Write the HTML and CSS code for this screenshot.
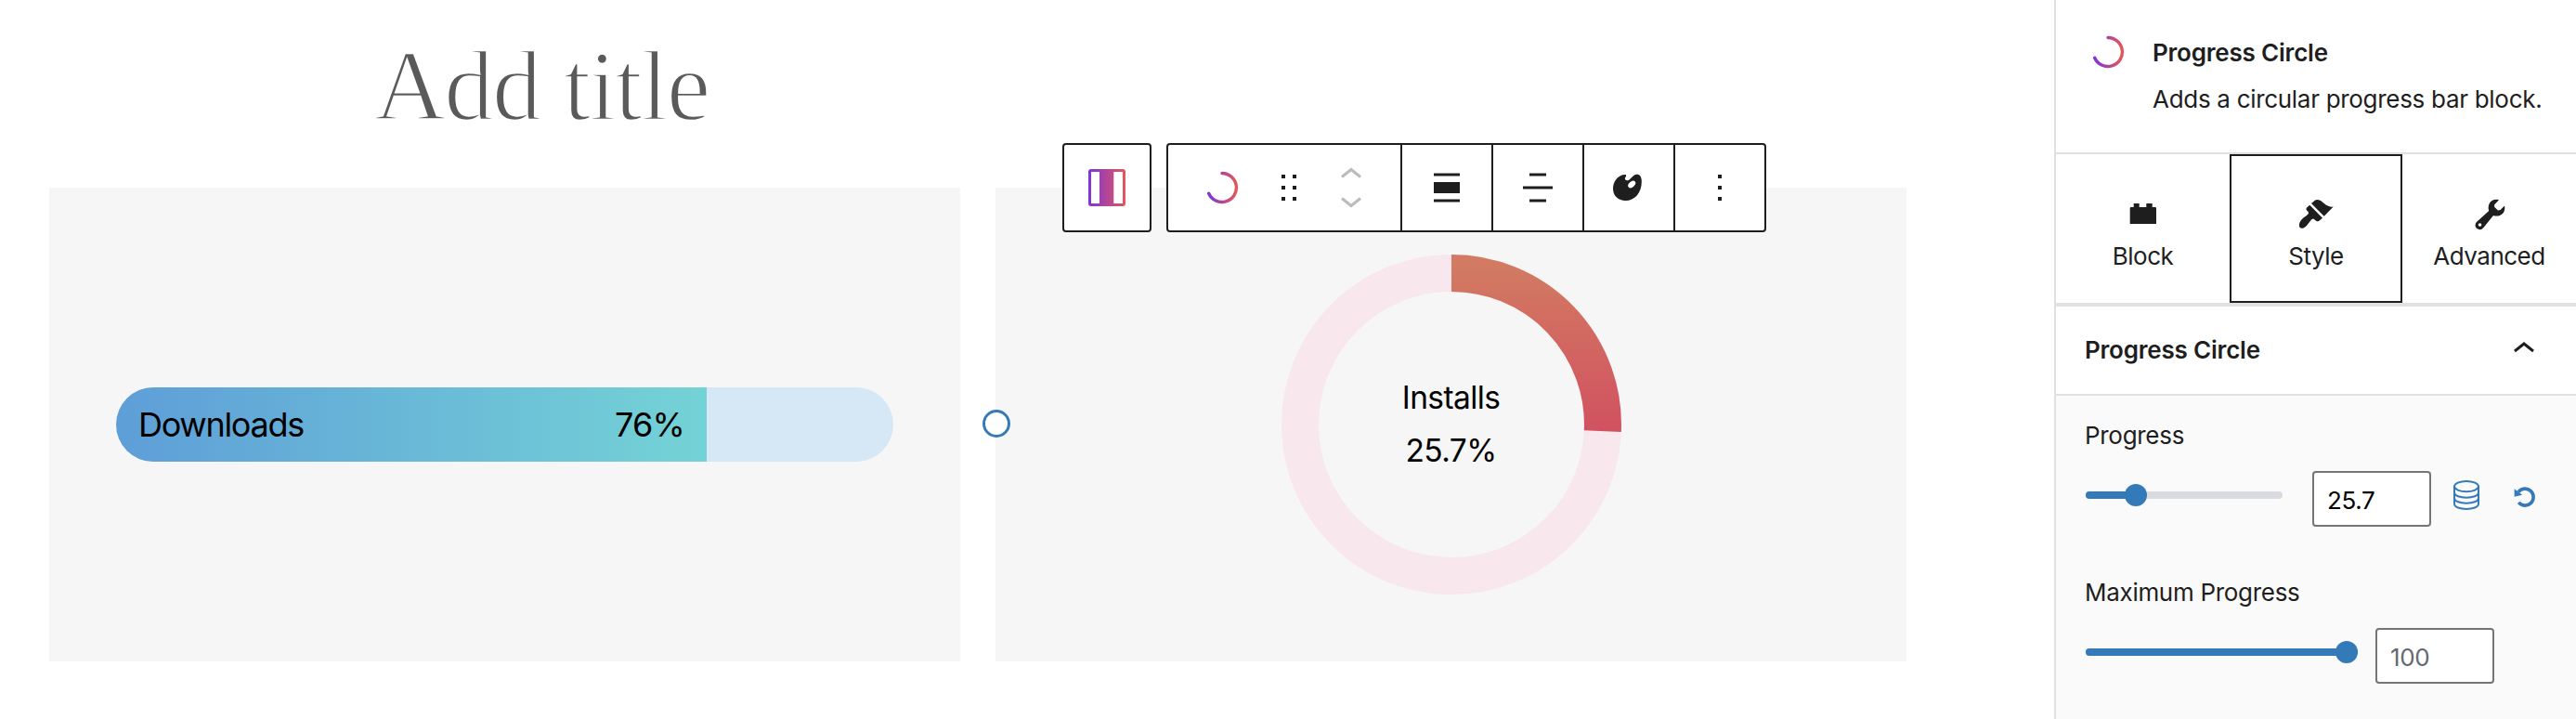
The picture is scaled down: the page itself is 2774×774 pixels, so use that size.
FILE: index.html
```
<!DOCTYPE html>
<html lang="en">

<head>
    <meta charset="UTF-8">
    <title>Add title</title>
    <link rel="stylesheet" href="styles.css">
</head>

<body>
    <svg class="defs" width="0" height="0">
        <defs>
            <linearGradient id="brand" x1="0" y1="0" x2="1" y2="0">
                <stop offset="0" stop-color="#7f35d6" />
                <stop offset="1" stop-color="#e3575b" />
            </linearGradient>
            <linearGradient id="ring" gradientUnits="userSpaceOnUse" x1="0" y1="0" x2="0" y2="190">
                <stop offset="0.05" stop-color="#d27b62" />
                <stop offset="1" stop-color="#d15160" />
            </linearGradient>
            <symbol id="circle-icon" viewBox="0 0 36 36">
                <path d="M18 2.5 A15.5 15.5 0 1 1 3.7 24.2" fill="none" stroke="url(#brand)" stroke-width="3.4" stroke-linecap="round" />
            </symbol>
        </defs>
    </svg>

    <main class="editor">
        <h1 class="title">Add title</h1>
        <div class="columns">
            <div class="column">
                <div class="bar">
                    <div class="bar-fill" style="width: 76%">
                        <span class="bar-label">Downloads</span>
                        <span>76%</span>
                    </div>
                </div>
            </div>
            <div class="column">
                <span class="handle"></span>
                <div class="circle">
                    <svg width="366" height="366" viewBox="0 0 366 366">
                        <circle cx="183" cy="183" r="163" fill="none" stroke="#f8e7ed" stroke-width="40" />
                        <path d="M183 20 A163 163 0 0 1 345.8 190.2" fill="none" stroke="url(#ring)" stroke-width="40" />
                    </svg>
                    <div class="circle-text">
                        <span>Installs</span>
                        <span>25.7%</span>
                    </div>
                </div>
            </div>
        </div>

        <div class="toolbar">
            <div class="group parent">
                <svg width="40" height="40" viewBox="0 0 40 40">
                    <path fill="url(#brand)" fill-rule="evenodd" d="M3 0H37Q40 0 40 3V37Q40 40 37 40H3Q0 40 0 37V3Q0 0 3 0ZM3 3V37H12V3ZM27.3 3V37H37V3Z" />
                </svg>
            </div>
            <div class="group">
                <div class="cell wide">
                    <svg class="block-icon" width="36" height="36"><use href="#circle-icon" /></svg>
                    <svg width="16" height="28" fill="#1e1e1e">
                        <path d="M0 0h4v4h-4zM12 0h4v4h-4zM0 12h4v4h-4zM12 12h4v4h-4zM0 24h4v4h-4zM12 24h4v4h-4z" />
                    </svg>
                    <svg class="movers" width="24" height="44" fill="none" stroke="#bbb" stroke-width="3">
                        <path d="M2 10.5 L12 2.5 L22 10.5 M2 33.5 L12 41.5 L22 33.5" />
                    </svg>
                </div>
                <div class="cell">
                    <svg width="32" height="32" fill="#1e1e1e">
                        <path d="M2 .5h28v3h-28zM2 10h28v12h-28zM2 28.5h28v3h-28z" />
                    </svg>
                </div>
                <div class="cell">
                    <svg width="32" height="32" fill="#1e1e1e">
                        <path d="M7 .5h18v3h-18zM0 14.5h32v3h-32zM7 28.5h18v3h-18z" />
                    </svg>
                </div>
                <div class="cell">
                    <svg width="40" height="40" fill="#1e1e1e">
                        <path d="M17 6C8 5.5 3 14 3 21C3 29 9 34 16.5 34C26 34 34 26 33.8 13C33.8 8 31.5 5.5 28.5 5.7C24 6 22.5 11 19 12.3C16.5 12.5 15.5 11 16 9.5Q17.5 7.5 17 6Z" />
                        <ellipse cx="23.2" cy="16.4" rx="4.6" ry="3" transform="rotate(-42 23.2 16.4)" fill="#fff" />
                    </svg>
                </div>
                <div class="cell">
                    <svg width="4" height="28" fill="#1e1e1e">
                        <path d="M0 0h4v4h-4zM0 12h4v4h-4zM0 24h4v4h-4z" />
                    </svg>
                </div>
            </div>
        </div>
    </main>

    <aside class="sidebar">
        <div class="card">
            <svg width="36" height="36"><use href="#circle-icon" /></svg>
            <div>
                <h2>Progress Circle</h2>
                <p>Adds a circular progress bar block.</p>
            </div>
        </div>

        <div class="tabs">
            <div class="tab">
                <svg width="40" height="40" fill="#1e1e1e">
                    <path d="M9.7 12V8h6v4h7.6V8h6.4v4H33q1 0 1 1V30H5.7V13q0-1 1-1Z" />
                </svg>
                <span>Block</span>
            </div>
            <div class="tab active">
                <svg width="40" height="40" fill="#1e1e1e">
                    <path d="M15 8L18.5 5Q21 3 25 5C29 8 33 12.5 38.7 11.6L28.7 21.7Z" />
                    <path d="M13.3 9.7L10 12.5Q8.8 14 10 15.5Q13 17.5 11.5 19.5Q10 21 7 23C3 26 1.2 30 2.3 33.5C4.5 36 8 34.5 10.3 31.5Q13 28 15 25.5Q17 24 18 25L20.5 27Q22.5 28 24 26.3L27 23.7Z" />
                </svg>
                <span>Style</span>
            </div>
            <div class="tab">
                <svg width="40" height="40" fill="#1e1e1e">
                    <path d="M30 4.3C22 2 17 9 19.2 16L6.2 27.8C4 30 4 33 6 34.8C8.5 36.8 11 36.5 13 34.5L24 21C31 23.5 38 18 36 10.5L31.5 15L29 15.5L25.3 12L25 9.5Z" />
                    <circle cx="9.5" cy="31" r="1.8" fill="#fff" />
                </svg>
                <span>Advanced</span>
            </div>
        </div>

        <div class="panel-head">
            <h2>Progress Circle</h2>
            <svg width="24" height="14" fill="none" stroke="#1e1e1e" stroke-width="3">
                <path d="M2 11 L12 3 L22 11" />
            </svg>
        </div>

        <div class="panel">
            <div class="field">
                <label for="progress">Progress</label>
                <div class="row">
                    <div class="slider short">
                        <div class="slider-fill" style="width: 25.7%"><i></i></div>
                    </div>
                    <input type="text" id="progress" value="25.7">
                    <svg class="db" width="28" height="32" viewBox="0 0 28 32" fill="none" stroke="#357ab8" stroke-width="2">
                        <ellipse cx="14" cy="6.6" rx="13" ry="5.6" />
                        <path d="M1 6.6V25.2C1 32.8 27 32.8 27 25.2V6.6M1 13C1 20.6 27 20.6 27 13M1 19C1 26.6 27 26.6 27 19" />
                    </svg>
                    <svg class="undo" width="24" height="24" viewBox="0 0 24 24">
                        <path d="M5 6.6A9 9 0 1 1 5.2 17.9" fill="none" stroke="#357ab8" stroke-width="3.6" />
                        <path d="M.6 3.2V11.8L9.2 9.8Z" fill="#357ab8" />
                    </svg>
                </div>
            </div>
            <div class="field">
                <label for="max">Maximum Progress</label>
                <div class="row">
                    <div class="slider long">
                        <div class="slider-fill" style="width: 100%"><i></i></div>
                    </div>
                    <input type="text" id="max" placeholder="100">
                </div>
            </div>
        </div>
    </aside>
</body>

</html>
```
FILE: styles.css
```
* {
    box-sizing: border-box;
}

body {
    display: flex;
    height: 774px;
    margin: 0;
    overflow: hidden;
    background-color: #fff;
    color: #1e1e1e;
    font-family: Inter, sans-serif;
    font-size: 26px;
    line-height: 34px;
}

h1, h2, p {
    margin: 0;
}

svg {
    display: block;
    flex: none;
}

.defs {
    position: absolute;
}

/* editor */
.editor {
    position: relative;
    width: 2212px;
    padding: 32px 53px 0;
}

.title {
    height: 170px;
    padding-left: 350px;
    color: #5a5a5a;
    font-family: "Liberation Serif", serif;
    font-size: 107px;
    font-weight: 400;
    line-height: 122px;
    letter-spacing: -1.9px;
    -webkit-text-stroke: 2.4px #fff;
}

.columns {
    display: flex;
    gap: 38px;
}

.column {
    position: relative;
    display: flex;
    align-items: center;
    justify-content: center;
    width: 981px;
    height: 510px;
    background-color: #f6f6f6;
    color: #000;
}

.bar {
    width: 837px;
    height: 80px;
    border-radius: 40px;
    background-color: #d6e7f5;
    overflow: hidden;
    font-size: 36px;
}

.bar-fill {
    display: flex;
    align-items: center;
    justify-content: space-between;
    height: 100%;
    padding: 0 24px;
    background: linear-gradient(90deg, #5e9ed8, #74d3d6);
    letter-spacing: -0.8px;
}

.bar-label {
    letter-spacing: -1.3px;
}

.handle {
    position: absolute;
    top: 239px;
    left: -14px;
    width: 30px;
    height: 30px;
    border: 3px solid #357ab8;
    border-radius: 50%;
    background-color: #fff;
}

.circle {
    position: relative;
}

.circle-text {
    position: absolute;
    inset: 0;
    display: flex;
    flex-direction: column;
    align-items: center;
    justify-content: center;
    font-size: 33.5px;
    line-height: 57px;
    letter-spacing: -0.6px;
}

/* toolbar */
.toolbar {
    position: absolute;
    top: 154px;
    left: 1144px;
    display: flex;
    gap: 16px;
}

.group {
    display: flex;
    height: 96px;
    border: 2px solid #1e1e1e;
    border-radius: 4px;
    background-color: #fff;
}

.parent {
    align-items: center;
    justify-content: center;
    width: 96px;
}

.cell {
    display: flex;
    align-items: center;
    justify-content: center;
    width: 98px;
    border-left: 2px solid #1e1e1e;
}

.cell.wide {
    justify-content: flex-start;
    width: 250px;
    border-left: 0;
}

.block-icon {
    margin: 0 46px 0 40px;
}

.movers {
    margin-left: 47px;
}

/* sidebar */
.sidebar {
    width: 562px;
    border-left: 2px solid #e0e0e0;
    letter-spacing: -0.3px;
}

.sidebar h2 {
    font-size: 26px;
    font-weight: 600;
    letter-spacing: -0.2px;
}

.card {
    display: flex;
    gap: 30px;
    height: 166px;
    padding: 38px 0 0 38px;
    border-bottom: 2px solid #e0e0e0;
}

.card h2 {
    margin: 2px 0 16px;
}

.card p {
    white-space: nowrap;
}

.tabs {
    display: grid;
    grid-template-columns: 187px 186px 187px;
    height: 164px;
    border-bottom: 4px solid #e0e1e3;
}

.tab {
    display: flex;
    flex-direction: column;
    gap: 8px;
    align-items: center;
    padding-top: 45px;
    letter-spacing: -0.5px;
}

.tab.active {
    padding-top: 43px;
    border: 2px solid #1e1e1e;
}

.panel-head {
    display: flex;
    align-items: center;
    justify-content: space-between;
    height: 96px;
    padding: 0 44px 0 31px;
    border-bottom: 2px solid #e0e0e0;
}

.panel-head svg {
    margin-bottom: 6px;
}

.panel {
    height: 348px;
    padding: 26px 0 0 32px;
    background-color: #fafafa;
}

.field {
    height: 169px;
}

.field label {
    display: block;
    margin: 0 0 21px -1px;
}

.row {
    display: flex;
    height: 60px;
}

.slider {
    height: 8px;
    margin-top: 22px;
    border-radius: 4px;
    background-color: #d9dbe0;
}

.slider.short {
    width: 212px;
    margin-right: 32px;
}

.slider.long {
    width: 293px;
    margin-right: 19px;
}

.slider-fill {
    display: flex;
    align-items: center;
    justify-content: flex-end;
    height: 8px;
    border-radius: 4px;
    background-color: #357ab8;
}

.slider-fill i {
    flex: none;
    width: 24px;
    height: 24px;
    border-radius: 50%;
    background-color: #357ab8;
}

.short i {
    margin-right: -12px;
}

input {
    width: 128px;
    height: 60px;
    padding: 3px 14px 0;
    border: 2px solid #757575;
    border-radius: 4px;
    background-color: #fff;
    color: #000;
    font: 26px Inter, sans-serif;
    letter-spacing: -0.4px;
}

::placeholder {
    color: #646970;
}

.db {
    margin: 10px 37px 0 24px;
}

.undo {
    margin-top: 16px;
}
```
